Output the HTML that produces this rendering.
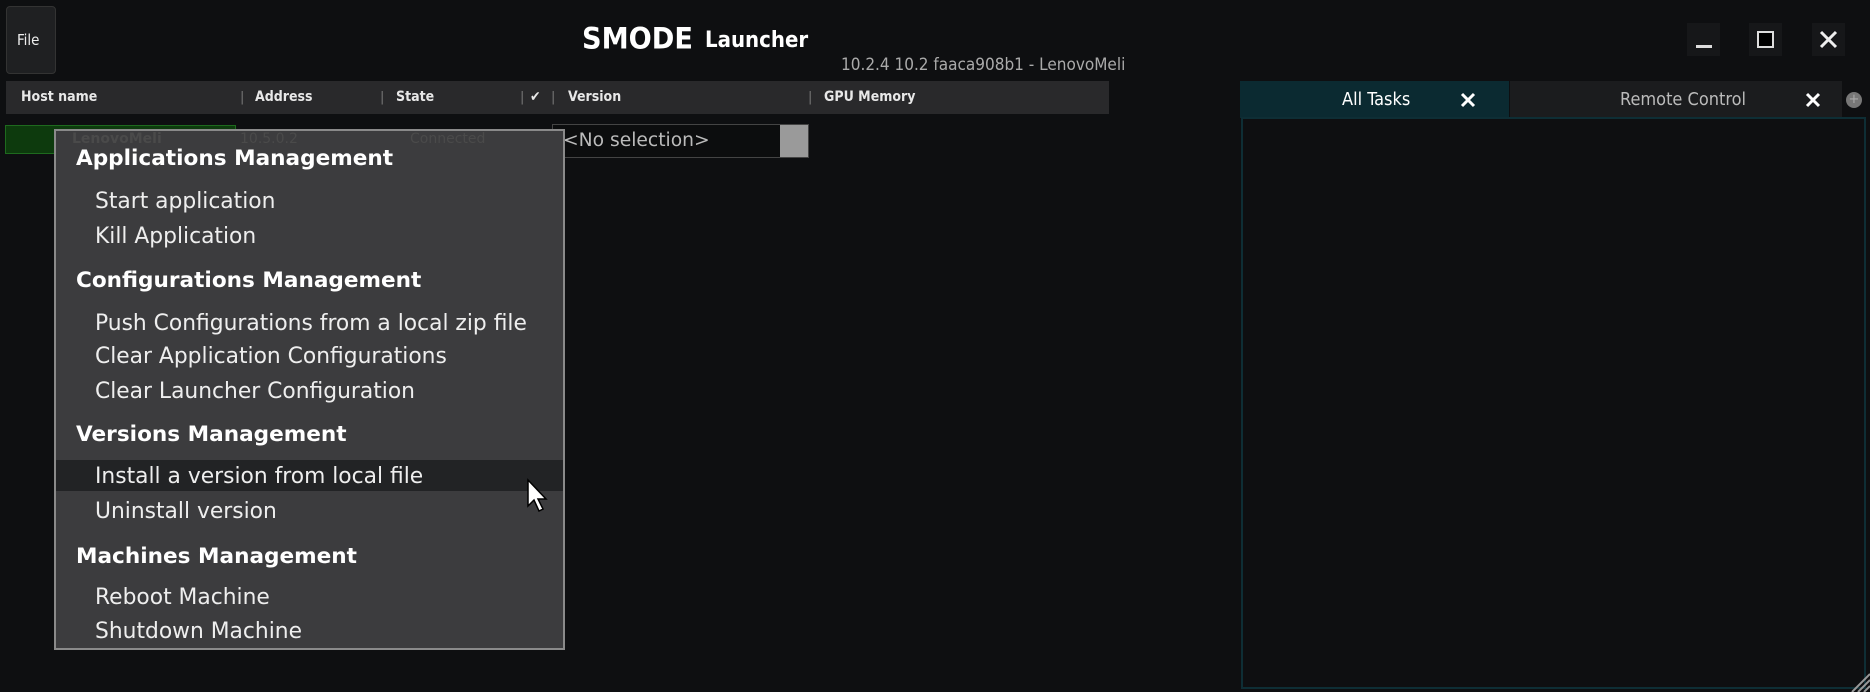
<!DOCTYPE html>
<html><head><meta charset="utf-8"><style>
*{margin:0;padding:0;box-sizing:border-box}
body{width:1870px;height:692px;background:#0e0f11;position:relative;overflow:hidden;font-family:"DejaVu Sans","Liberation Sans",sans-serif;color:#fff}
.a{position:absolute;white-space:nowrap}
.hdr{font-family:"DejaVu Sans Condensed","DejaVu Sans",sans-serif;font-weight:bold;font-size:14px;color:#e8e8e8;top:89px}
.sep{color:#777;font-size:13px;top:90px}
.h{font-weight:bold;font-size:21.6px;left:76px;color:#fff;line-height:26px}
.i{font-size:21.8px;left:95px;color:#eee;line-height:24px}
.wb{position:absolute;top:23px;width:33px;height:33px;background:#161719}
</style></head><body>
<div class="a" style="left:6px;top:6px;width:50px;height:68px;background:#1f2022;border:1px solid #333;border-radius:4px"></div>
<div class="a" style="left:17px;top:31px;font-size:15px;color:#eee;font-family:'DejaVu Sans Condensed','DejaVu Sans',sans-serif">File</div>

<div class="a" style="left:582px;top:22px;font-size:34px;font-weight:bold;font-family:'DejaVu Sans',sans-serif;color:#fff;transform:scale(0.8,0.85);transform-origin:top left">SMODE</div>
<div class="a" style="left:705px;top:28px;font-size:22px;font-weight:bold;font-family:'DejaVu Sans Condensed','DejaVu Sans',sans-serif">Launcher</div>
<div class="a" style="left:841px;top:55px;font-size:17px;color:#aaa;font-family:'DejaVu Sans Condensed','DejaVu Sans',sans-serif">10.2.4 10.2 faaca908b1 - LenovoMeli</div>

<div class="a" style="left:6px;top:81px;width:1103px;height:33px;background:#29292b"></div>
<div class="a hdr" style="left:21px">Host name</div>
<div class="a sep" style="left:240px">|</div>
<div class="a hdr" style="left:255px">Address</div>
<div class="a sep" style="left:380px">|</div>
<div class="a hdr" style="left:396px">State</div>
<div class="a sep" style="left:520px">|</div>
<div class="a hdr" style="left:530px">✔</div>
<div class="a sep" style="left:551px">|</div>
<div class="a hdr" style="left:568px">Version</div>
<div class="a sep" style="left:808px">|</div>
<div class="a hdr" style="left:824px">GPU Memory</div>

<div class="a" style="left:5px;top:125px;width:231px;height:29px;background:#0d3a0d;border:1px solid #1e6a1e"></div>
<div class="a" style="left:552px;top:124px;width:257px;height:34px;background:#0c0d0e;border:1px solid #444"></div>
<div class="a" style="left:780px;top:125px;width:28px;height:32px;background:#9a9a9a"></div>
<div class="a" style="left:563px;top:130px;font-size:18.7px;color:#bbb">&lt;No selection&gt;</div>

<div class="a" style="left:54px;top:129px;width:511px;height:521px;background:#3c3c3e;border:2px solid #8a8a8a"></div>
<div class="a" style="left:72px;top:131px;font-size:14px;color:#4a4a4a;font-weight:bold">LenovoMeli</div>
<div class="a" style="left:240px;top:131px;font-size:14px;color:#4a4a4a">10.5.0.2</div>
<div class="a" style="left:410px;top:131px;font-size:14px;color:#4a4a4a">Connected</div>
<div class="a" style="left:56px;top:460px;width:507px;height:31px;background:#222325"></div>

<div class="a h" style="top:146px">Applications Management</div>
<div class="a i" style="top:190px">Start application</div>
<div class="a i" style="top:225px">Kill Application</div>
<div class="a h" style="top:268px">Configurations Management</div>
<div class="a i" style="top:312px">Push Configurations from a local zip file</div>
<div class="a i" style="top:345px">Clear Application Configurations</div>
<div class="a i" style="top:380px">Clear Launcher Configuration</div>
<div class="a h" style="top:422px">Versions Management</div>
<div class="a i" style="top:465px">Install a version from local file</div>
<div class="a i" style="top:500px">Uninstall version</div>
<div class="a h" style="top:544px">Machines Management</div>
<div class="a i" style="top:586px">Reboot Machine</div>
<div class="a i" style="top:620px">Shutdown Machine</div>

<svg class="a" style="left:526px;top:478px" width="28" height="36" viewBox="0 0 28 36"><path d="M2 2 L2 28 L8 22 L13 33 L17 31 L12 21 L20 21 Z" fill="#fff" stroke="#000" stroke-width="1.5"/></svg>

<div class="wb" style="left:1687px"></div>
<div class="a" style="left:1696px;top:45px;width:16px;height:3px;background:#ddd"></div>
<div class="wb" style="left:1749px"></div>
<div class="a" style="left:1757px;top:31px;width:17px;height:17px;border:2px solid #ddd;background:#000"></div>
<div class="wb" style="left:1812px"></div>
<svg class="a" style="left:1819px;top:30px" width="19" height="19"><path d="M2 2L17 17M17 2L2 17" stroke="#eee" stroke-width="3"/></svg>

<div class="a" style="left:1240px;top:81px;width:269px;height:37px;background:#0b2a31"></div>
<div class="a" style="left:1510px;top:81px;width:332px;height:36px;background:#1b1c1e"></div>
<div class="a" style="left:1342px;top:89px;font-size:18px;color:#fff;font-family:'DejaVu Sans Condensed','DejaVu Sans',sans-serif">All Tasks</div>
<svg class="a" style="left:1460px;top:92px" width="16" height="16"><path d="M2 2L14 14M14 2L2 14" stroke="#fff" stroke-width="3"/></svg>
<div class="a" style="left:1620px;top:89px;font-size:18px;color:#bbb;font-family:'DejaVu Sans Condensed','DejaVu Sans',sans-serif">Remote Control</div>
<svg class="a" style="left:1805px;top:92px" width="16" height="16"><path d="M2 2L14 14M14 2L2 14" stroke="#fff" stroke-width="3"/></svg>
<div class="a" style="left:1846px;top:92px;width:16px;height:16px;border-radius:50%;background:#777;color:#aaa;font-size:13px;line-height:16px;text-align:center">+</div>
<div class="a" style="left:1241px;top:117px;width:625px;height:572px;border:2px solid #0e2e35"></div>
<svg class="a" style="left:1848px;top:670px" width="22" height="22"><path d="M4 22L22 4M10 22L22 10M16 22L22 16" stroke="#999" stroke-width="2"/></svg>
</body></html>
